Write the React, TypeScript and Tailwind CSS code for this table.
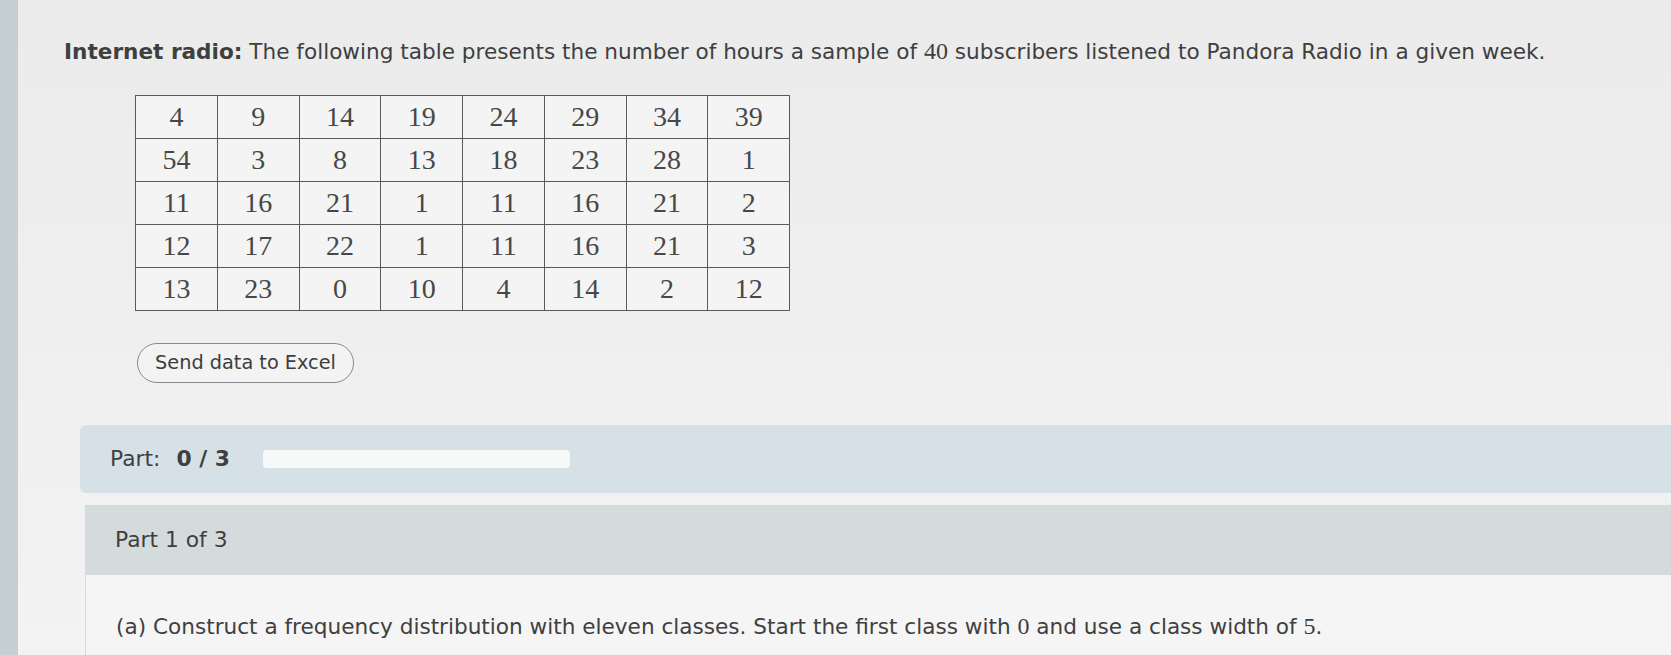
import React from "react";

const rows = [
  [4, 9, 14, 19, 24, 29, 34, 39],
  [54, 3, 8, 13, 18, 23, 28, 1],
  [11, 16, 21, 1, 11, 16, 21, 2],
  [12, 17, 22, 1, 11, 16, 21, 3],
  [13, 23, 0, 10, 4, 14, 2, 12],
];

const sans = { fontFamily: '"DejaVu Sans", Verdana, sans-serif' };
const serif = { fontFamily: '"Liberation Serif", "Times New Roman", serif' };

export default function App() {
  return (
    <div className="flex h-[655px] w-[1671px] overflow-hidden bg-[#ececec] text-[#3f3f3f]" style={sans}>
      <div className="w-[18px] shrink-0 bg-[#c6d0d4]" />
      <div className="flex flex-1 flex-col bg-gradient-to-b from-[#ebebeb] via-[#efefef] to-[#f3f3f3]">
        <p className="ml-[46px] mt-[37px] h-[28px] text-[21.6px] leading-[28px] whitespace-nowrap">
          <span className="font-bold">Internet radio:</span> The following table presents the number of hours a sample of{" "}
          <span style={serif} className="text-[24px]">40</span> subscribers listened to Pandora Radio in a given week.
        </p>

        <table className="ml-[117px] mt-[30px] w-[655px] border-collapse text-[28px]" style={serif}>
          <tbody>
            {rows.map((r, i) => (
              <tr key={i} className="h-[43px]">
                {r.map((v, j) => (
                  <td key={j} className="w-[82px] border-[1.5px] border-[#5a5a5a] bg-[#f4f4f4] p-0 text-center leading-[40px] text-[#474747]">
                    {v}
                  </td>
                ))}
              </tr>
            ))}
          </tbody>
        </table>

        <div className="ml-[119px] mt-[32px]">
          <button className="h-[40px] w-[217px] rounded-full border-[1.5px] border-[#8a8a8a] bg-[#f3f3f3] text-[19.3px] text-[#3d3d3d]" style={sans}>
            Send data to Excel
          </button>
        </div>

        <div className="ml-[62px] mt-[42px] flex h-[68px] items-center rounded-l-[6px] bg-[#d6e1e7] pl-[30px]">
          <span className="text-[21.8px]">Part:</span>
          <span className="ml-[16px] text-[21.8px] font-bold">0 / 3</span>
          <div className="ml-[33px] h-[18px] w-[307px] rounded-[4px] bg-[#f7f8f8]" />
        </div>

        <div className="ml-[67px] mt-[12px] flex h-[70px] items-center bg-[#d4dbdd] pl-[30px] text-[21.8px]">
          Part 1 of 3
        </div>

        <div className="ml-[67px] flex-1 border-l-[1.5px] border-[#d8d8d8] bg-[#f5f5f5] pl-[30px] pt-[37px]">
          <p className="text-[21.6px] leading-[28px] whitespace-nowrap">
            (a) Construct a frequency distribution with eleven classes. Start the first class with{" "}
            <span style={serif} className="text-[24px]">0</span> and use a class width of{" "}
            <span style={serif} className="text-[24px]">5</span>.
          </p>
        </div>
      </div>
    </div>
  );
}
